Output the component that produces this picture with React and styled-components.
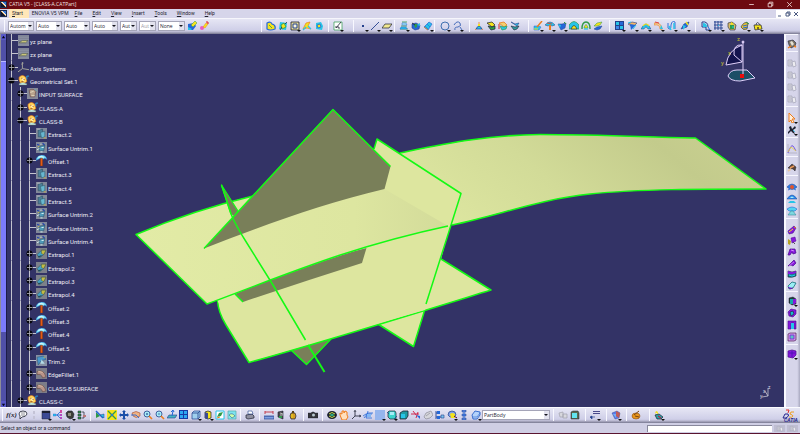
import React from "react"
import styled, { createGlobalStyle, css } from "styled-components"

const K = "#1c2030"
const N = "#23408c"
const B = "#2467d8"
const C = "#27c4e8"
const L = "#a6ecf6"
const Y = "#f4e31c"
const O = "#ee7d1c"
const P = "#8517dc"
const V = "#4a0b8c"
const G = "#2f9a4a"
const S = "#a9a9bc"
const W = "#ffffff"

// each icon is a list of [path, fill, stroke, stroke width] on a 10 x 10 grid
const icons = {
    paste: [["M1 3l6-1 2 3-3 4H1z", B], ["M4 4l4-4 2 2-4 4z", Y, G, 0.5], ["M1 6l4 2-1 1H1z", C]],
    ball: [["M1 7a2 2 0 1 0 4 0a2 2 0 1 0-4 0", "#ea5bc0"], ["M4 6l3-4 2 1-3 4z", Y, O, 0.5], ["M7 1h2v2", "none", "#e02020", 1]],
    blob: [["M1 2q4-2 5 1q4 1 3 5q-5 2-8 0z", Y, B, 1.2], ["M3 4l3 3", "none", G, 0.8]],
    patch: [["M2 1l7 1-1 7-7-1z", C], ["M3 4l3-2 2 4-4 2z", Y, G, 0.8], ["M2 9l2-3M7 3l2-2", "none", K, 0.7]],
    frame: [["M1 1h8v8H1z", "#e6dc9c", K, 0.8], ["M3 3h4v4H3z", "#f6f4e0", N, 1]],
    fold: [["M1 8l3-6 4-1-2 4 3 3-4-1z", Y, O, 0.7], ["M1 9l3-3M6 5l3 3", "none", C, 1.2]],
    splat: [["M2 2l5-1 2 4-1 4-6-1z", C], ["M3 4l3-1 1 3-3 1z", Y, B, 0.8]],
    sketch: [["M1 1h8v8H1z", W, G, 0.7], ["M3 7l5-6M2 6h4v2", "none", K, 0.8]],
    point: [["M4 4h2v2H4z", N]],
    line: [["M1 9l8-8", "none", N, 0.9]],
    plane: [["M3 3h7L7 7H0z", "#f1e890", K, 0.7]],
    sweep: [["M3 1h5M2 5h6M1 8h8", "none", G, 0.8], ["M3 2l4 0 1 2H3z", L, B, 0.5], ["M2 6h5l1 2H1z", C, B, 0.5]],
    cube3: [["M1 3l4-1 4 2-1 4-4 1-3-2z", B, N, 0.6], ["M3 3l3 0 0 3-2 1z", G], ["M6 4l3-2v3z", C], ["M1 2l3 2", "none", K, 0.8]],
    tube: [["M1 6l5-5 3 2-4 6z", C, B, 0.7], ["M2 5l3 3M4 3l3 3", "none", B, 0.6], ["M1 6l4 3", "none", O, 0.8]],
    circle: [["M1 5a4 4 0 1 0 8 0a4 4 0 1 0-8 0", "none", "#2e64a8", 0.9]],
    spline: [["M1 4q3-5 6-2q2 3-2 4q-4 0-3 3M7 6l2 3", "none", "#3a62b4", 0.9]],
    shell: [["M5 1v4L1 9M5 5l4 4", "none", O, 0.8], ["M2 8q3-6 6 0z", C, N, 0.7], ["M4 3h2v2H4z", Y]],
    stack: [["M1 2l5-1 3 3-3 2z", Y, K, 0.7], ["M2 5l4 1 3-1v3l-4 1z", G, K, 0.7]],
    stackO: [["M1 2l5-1 3 3-3 2z", "#f0d070", O, 0.8], ["M2 5l4 1 3-1-1 3-4 1z", C, G, 0.7], ["M1 3v5", "none", "#e02020", 1]],
    stackC: [["M1 1l4 2 4-1-2 3z", C, N, 0.6], ["M1 5l4 1 4-1-2 3-3 1z", "#2f9aa0", K, 0.6]],
    slash: [["M1 5h5l2 1-2 3H1z", C, B, 0.5], ["M4 6l5-6", "none", O, 1.4], ["M1 8h4", "none", Y, 1]],
    cap: [["M0 4q5-6 10 0l-3 1-2-1-2 1z", C, N, 0.5], ["M4 4h2v5H4z", O], ["M2 2l5 1", "none", "#e04020", 0.8]],
    capG: [["M0 5Q0 1 5 0q4 0 5 4l-2-1-2 1-2-1z", "#7ce6f5", B, 0.4], ["M4 3h2v7H4z", "#e65c14", "#7a3010", 0.4], ["M2 2q3-1 5 0", "none", W, 0.8]],
    cyl: [["M1 3l4 0 4-1-1 5-4 2z", B, N, 0.5], ["M1 3l3 1-1 3z", C], ["M7 1l2 2", "none", G, 1]],
    dome: [["M0 8V4q5-7 10 0v4z", C, G, 0.7], ["M2 8q3-7 6 0z", Y, K, 0.6]],
    arch: [["M1 8q0-7 4-7q4 0 4 7", "none", G, 1.4], ["M3 7q2-7 4 0z", Y, G, 0.6], ["M3 8h4", "none", C, 1.2]],
    waves: [["M1 5l3-3 5-1-2 3-3 1z", Y, G, 0.5], ["M1 8l3-2 5-1-2 3-3 1z", B, N, 0.5]],
    tiles: [["M0 0h9v9H0z", N], ["M1 1h3v3H1zM5 5h3v3H5z", C], ["M5 1h3v3H5z", B], ["M1 5h3v3H1z", "#3e86e8"]],
    hang: [["M0 3l4-2 5 1-4 4z", "#f3b565", N, 0.6], ["M2 3l6 1-5 5z", B], ["M0 2l3-1M5 8l3-4", "none", C, 1]],
    bow: [["M0 8q5-10 10 0l-3 0q-2-4-4 0z", C, N, 0.5], ["M2 5q3-4 6 0", "none", Y, 1.2]],
    bend: [["M0 2q8-1 8 7l-2-1q0-5-6-4z", "#f0cf9a", O, 0.6], ["M7 4l2 4H6z", C], ["M1 1l4 1", "none", "#e02020", 0.8]],
    loops: [["M1 2v5q3 3 3-3q1-5 4-3v7", "none", B, 0.9], ["M2 5l2 4M7 2v6", "none", C, 1.5]],
    kite: [["M1 8l3-5 5-2-2 5z", B, N, 0.6], ["M3 4l3 1-3 4z", C], ["M6 1l2 3", "none", Y, 1.4]],
    steps: [["M1 1q6-1 6 5M1 1v5h4v3h4", "none", N, 1], ["M2 2q4 0 4 4H2z", C], ["M7 6l2 3", "none", B, 1]],
    grid9: [["M1 0v9M4 0v9M7 0v9M0 1h9M0 4h9M0 7h9", "none", N, 0.9], ["M4 4h1v1H4z", C]],
    box: [["M1 2l4-1 4 3-1 5-5 0-2-3z", "#d9bd6b", K, 0.6], ["M3 4h4v4H3z", G], ["M4 1l3 2-3 1z", Y], ["M5 6h2", "none", C, 1]],
    clip: [["M1 6q3-6 7-4l-1 6q-4 2-6-2z", "#e5c336", K, 0.6], ["M3 5l4-1M3 7l5-1", "none", B, 1], ["M6 1l3 2", "none", G, 1]],
    pack: [["M1 4l7 0 1 4-7 1z", Y, K, 0.7], ["M3 4q1-5 4 0", "none", K, 0.7], ["M4 6h2v2H4z", "#7e6620"]],
    bubble: [["M1 4q0-3 4-3q4 0 4 3q-1 3-5 3L2 9l0-3z", W, K, 0.8], ["M3 3h4M3 5h4", "none", K, 0.5]],
    ghost: [["M4 1h2v3H4zM4 6h2v3H4z", "#c4c3d6"]],
    sheet: [["M1 1h8v8H1z", "#3c4a94", K, 0.5], ["M1 1h8v2H1z", K]],
    branch: [["M1 5h3M4 5l3-3M4 5l3 3M4 5h3", "none", B, 0.8], ["M0 4h3v2H0z", C, B, 0.4], ["M7 0h2v3H7z", "#d04aa0"], ["M7 4h2v2H7zM7 7h2v2H7z", "#b04ac0"]],
    bug: [["M3 1h4l2 3-1 4-3 1-3-2-1-4z", "#3b3c38", K, 0.6], ["M3 3h3v3H3z", "#8f8f80"]],
    list: [["M1 1h3v2H1zM1 4h3v2H1zM1 7h3v2H1z", G, K, 0.5], ["M5 2h2v6H5", "none", K, 0.7], ["M6 5h3v2H6z", "#b77"]],
    fly: [["M1 2l4 4-4 2z", G], ["M1 1l7 7", "none", B, 1.5], ["M5 5l4-1v4z", C, N, 0.5]],
    fit: [["M0 0h10v10H0z", Y], ["M1 1l3 3M9 1L6 4M1 9l3-3M9 9L6 6", "none", G, 1.3], ["M4 4h2v2H4z", C, N, 0.5]],
    pan: [["M5 0l2 2H6v2h2V3l2 2-2 2V6H6v2h1l-2 2-2-2h1V6H2v1L0 5l2-2v1h2V2H3z", "#1b4fa8"]],
    rotate: [["M1 3q4-3 8 0v3q-4 3-7 0z", "#efb285", "#a04a30", 0.6], ["M0 5h5l3 3", "none", B, 0.9]],
    zoomIn: [["M1 4a3 3 0 1 0 6 0a3 3 0 1 0-6 0", L, N, 0.8], ["M3 4h2M4 3v2", "none", N, 0.7], ["M6 6l3 3", "none", O, 1.6]],
    zoomOut: [["M1 4a3 3 0 1 0 6 0a3 3 0 1 0-6 0", L, N, 0.8], ["M3 4h2", "none", N, 0.7], ["M6 6l3 3", "none", O, 1.6]],
    normal: [["M0 8l2-3h8L8 8z", "#47b2c2", N, 0.6], ["M5 6l1-5M4 2l2-2 1 2", "none", B, 1]],
    quad: [["M0 0h9v9H0z", "#1738a4"], ["M1 1h3v3H1zM5 1h3v3H5zM1 5h3v3H1zM5 5h3v3H5z", "#2ca6f0"]],
    iso: [["M1 3l2-2h6v6L7 9H1z", "#9fd0ee", N, 0.7], ["M1 3h6v6M7 3l2-2", "none", N, 0.8]],
    shade: [["M2 2q3-2 6 0v6q-3 2-6 0z", Y, K, 0.7], ["M2 2q2 1 3 1v6q-2 0-3-1z", "#3c4a94"]],
    swap: [["M1 1h8v8H1z", W, C, 1], ["M2 7l2-4 4-1-2 4z", G], ["M2 8l3-1", "none", O, 1]],
    swap2: [["M1 1h8v8H1z", "#7de4ee", "#5aa", 0.7], ["M2 5q3-3 6 1l-3 2z", "#cfa", N, 0.5]],
    print: [["M1 5l6-1 2 2v2l-6 1-2-1z", "#9090a0", K, 0.7], ["M3 1h4l1 3H3z", W, N, 0.6]],
    measure: [["M1 1v3M9 1v3M1 2h8", "none", "#c03040", 0.9], ["M0 6h10v3H0z", "#7e9fe0", N, 0.7], ["M2 6v1M4 6v1M6 6v1M8 6v1", "none", N, 0.6]],
    item: [["M2 2l5-1v8l-5-2z", "#4c4c50", K, 0.6], ["M4 3l3 1M4 5l3 0", "none", "#d8d8d8", 0.8], ["M3 6h3v2H3z", G]],
    weight: [["M3 3h4l1 3-1 3H3L2 6z", "#d59e22", K, 0.7], ["M4 1h2v2H4z", "#55401a"], ["M4 4v4", "none", Y, 0.8]],
    camera: [["M0 3l3 0 1-1h2l1 1h3v5H0z", "#34343a", K, 0.4], ["M4 5a1.500 1.500 0 1 0 3 0a1.500 1.500 0 1 0-3 0", "#b8c8d0"]],
    update: [["M0 5q1-4 5-4q4 0 5 4q-1 4-5 4q-4 0-5-4z", K], ["M2 4q3-3 6 0M2 6q3 3 6 0", "none", "#c8dc50", 1], ["M3 5q2-2 4 0q-2 2-4 0", C, G, 0.7]],
    hand: [["M1 5V3l2 1V1h2v2l1-2 2 1v3l1 2-2 3H3z", "#ffe0bd", O, 1]],
    axis: [["M4 1v5L1 9M4 6l6 0", "none", K, 0.8], ["M3 2l1-2 1 2M8 5l2 1-2 1", "none", K, 0.6]],
    mesh: [["M0 6l3-2h6M1 8l4-5h5M3 8h6M5 1l-2 7", "none", B, 0.8], ["M4 4h4v3H4z", "#82b7f4"]],
    grid: [["M0 0h10v10H0z", "#cfe4fb"], ["M1 0v10M3 0v10M5 0v10M7 0v10M9 0v10M0 1h10M0 3h10M0 5h10M0 7h10M0 9h10", "none", "#4a7ad8", 0.5]],
    solid: [["M2 1h6l1 2v6H3L1 7V2z", "#3cd4cc", K, 0.7], ["M3 2h4v3H3z", L], ["M0 2l2 2M7 9l3-3", "none", N, 0.8]],
    solid2: [["M1 3l3-2h5v5L7 9H1z", "#1d9ca4", K, 0.8], ["M2 4h4v4H2z", C]],
    cut: [["M2 1l3 4M0 4h8M7 2l-2 6", "none", "#d02a50", 1], ["M5 5l4 1v3z", B]],
    stone: [["M1 7l2-4 5-2 2 4-3 3-4 1z", "#d6d6dc", "#8c8c98", 0.7], ["M3 6l4-3", "none", "#8c8c98", 0.7]],
    nodes: [["M1 1v8M1 3h3M1 7h5", "none", N, 0.9], ["M2 1h3v3H2zM2 6h3v3H2z", B], ["M6 5h3v3H6z", "#7cc4f0", N, 0.6]],
    gear: [["M1 5q0-4 4-4q4 0 4 4l-2 2H3z", "#7fa0e8", N, 0.7], ["M3 4q2-2 5 0l0 4H4z", Y], ["M7 6l3 2", "none", "#404", 1]],
    pins: [["M3 0h4v2H3zM3 4h4v2H3zM3 8h4v2H3z", "#5a86e4", N, 0.5], ["M5 2v6", "none", B, 1]],
    body: [["M1 5l3-4 5 1 0 3-3 4-4 0z", "#b4d2fb", "#2b63c8", 0.9], ["M2 7l4 0 3-4", "none", "#2b63c8", 0.6]],
    ghost2: [["M1 3l4-1v5H2zM5 4h4v4H5z", "#d8d8de", "#a2a2ae", 0.7]],
    ghostBox: [["M1 2h4v6H1z", "#d4d4dc", S, 0.8], ["M5 4l3-1 1 5-3 1z", "#ececf0", S, 0.8], ["M2 4h2M2 6h2", "none", S, 0.7]],
    cubeC: [["M1 2l2-1h5l1 2v6H1z", "#5b6b50", K, 0.5], ["M2 3h5v5H2z", "#62e4ee"]],
    tag: [["M3 1h7v1H3zM3 3h7v1H3z", "#4a4a8a"], ["M0 7l2-1v3zM2 7h3", "#23408c", N, 0.7]],
    shield: [["M1 3l5-2 3 2-1 5-4 1z", "#5d7be8", N, 0.4], ["M5 1l4 2-1 5-3-2z", "#c05c58"], ["M2 4l3 0 0 4z", "#74b0f4"]],
    orange: [["M1 6a4 3 0 1 0 8 0a4 3 0 1 0-8 0", "#e8961c", "#8a4a10", 0.6], ["M3 5l5-4M4 6l4 1", "none", "#7a4410", 1]],
    paint: [["M1 5l4-1 4 3-2 2-4 0z", "#27a4a8", K, 0.7], ["M2 1l2 3M1 3l3-1", "none", Y, 1], ["M4 6l3 2", "none", "#c02040", 1.2]],
    boot: [["M1 2l5-1 3 3-1 3-4 2-2-3z", "#7b7468", K, 0.6], ["M3 3l2-1 2 3-2 2z", "#e6e2d4"], ["M1 9l3-2M7 7l2 1", "none", O, 1.4]],
    arrow: [["M2 0l6 6H5l2 3-2 1-1-3-2 2z", "#fff0dc", O, 1]],
    tools: [["M2 2l2-1 1 3 3-3 1 2-3 2 2 4-2-1-2-2-3 3 0-2 2-2z", K], ["M6 5l2 2", "none", C, 0.8]],
    graph: [["M1 0v9h9", "none", S, 0.7], ["M1 9q3-9 5-7q1 1 3 5", "none", "#6a48e0", 0.9], ["M1 8l3-5 5 4", "none", "#e6cf3c", 0.8]],
    brush: [["M1 5l4-4 4 3-1 4-2-2z", "#5a4236", K, 0.5], ["M3 5l4-2", "none", "#e89858", 1.4], ["M1 8l3-2", "none", "#e6c6a0", 1.6]],
    eye: [["M0 5q5-6 10 0q-5 5-10 0z", "#2c7ce4", N, 0.5], ["M3 5a2 2 0 1 0 4 0a2 2 0 1 0-4 0", "#e2542c"], ["M1 8l2-1M9 8l-2-1", "none", B, 0.9]],
    umbrella: [["M0 5q5-8 10 0z", "#2a8cf0", N, 0.5], ["M3 4q2-3 4 0z", L], ["M3 7h4l2 2H1z", C]],
    umbrella2: [["M0 3q5-4 10 0l-2 2H2z", "#54d4f0", B, 0.6], ["M1 9l3-4h2l3 4z", "#7dd8e0", "#3c8c9c", 0.6]],
    pPencil: [["M1 6l6-5 2 2-3 5-4 1z", P, V, 0.6], ["M2 7l4-3", "none", Y, 1], ["M7 2l2 1", "none", O, 1]],
    pCut: [["M4 2l4-1 1 4-4 2z", P, V, 0.5], ["M1 3l3 2-1 4-2-1z", "#b6a420"], ["M6 6l2 2", "none", "#555", 1]],
    pPad: [["M1 8l2-6 5 0 1 4-3 1-1-2-2 3z", P, V, 0.7], ["M4 3l3 1", "none", "#d48aff", 1]],
    pRib: [["M1 8l6-6 2 3-3 3-2-1z", P, V, 0.7], ["M2 8l5-4", "none", "#d48aff", 0.8]],
    pShell: [["M1 2q4 2 8 0v5q-4 2-8 1z", "#12848c", K, 0.6], ["M1 2q4 2 8 0v2q-4 2-8 1z", P], ["M2 6q3 2 6 0", "none", C, 1]],
    pFillet: [["M1 6l4-4 4 1-3 5-4 1z", "#9aeef4", "#187078", 0.8], ["M1 7l2 2 3-1", P, V, 0.5]],
    pBlock: [["M2 2l4-1 3 2v5l-4 1-3-2z", "#20383c", K, 0.5], ["M3 3h3v5H3z", "#16a8a8"], ["M6 3l3 0v4l-3 2z", P]],
    pHole: [["M1 4l3-3 5 1v4L6 9 2 8z", P, V, 0.6], ["M3 4l3-1 1 3-3 2z", "#18bccc", K, 0.6]],
    pGate: [["M1 1h8v8H7V3H4v6H1z", P, V, 0.6], ["M4 3h3v6H4z", C]],
    pFrame: [["M1 2l2-1h6v7l-2 1H1z", "#c9a0e4", "#404", 0.6], ["M3 3h4v4H3z", "#5ac4c4", P, 0.8]],
    pGroup: [["M1 2l4-1 4 1v4L6 9 1 8z", P, V, 0.7], ["M2 4h6M5 2v6", "none", "#4614b0", 0.8]],
    // specification tree
    tPlane: [["M0 0h10v10H0z", "#7f8496"], ["M1 7l3-2h5L7 7z", "#c8c47a", "#4f5a50", 0.5], ["M0 2h10M0 4h10M0 9h10", "none", "#9a9fb0", 0.5]],
    tAxis: [["M4 0v6L0 9M4 6l6 1M3 2l2-1", "none", "#a2a29a", 0.9]],
    tSet: [["M1 2q3-3 6 0l1 4-3 2-3-1-1-3z", "#ffd75e", O, 0.6], ["M3 3l3 0-1 3z", "#fff6c8"], ["M1 8q3-2 7 0v1H1z", "#c8f2f4", "#6a7a60", 0.4], ["M8 4V1h2", "none", "#2ca8e8", 0.8], ["M3 3h1M5 4h1M3 6h2", "none", "#a04c20", 0.8]],
    tInput: [["M0 0h10v10H0z", "#868a98"], ["M2 2q4-2 6 1l-1 5-4 0z", "#b8a48e", "#6a4a44", 0.6], ["M3 4l3-1M4 7h3", "none", "#e8e0c4", 0.8], ["M7 1l2 2", "none", "#5ab8c8", 0.7]],
    tExtract: [["M0 0h10v10H0z", "#828999"], ["M2 2l4-1v7l-4 0z", "#4c8098", "#2a4a60", 0.5], ["M4 4l4-1v5l-3 1z", "#68b8d0", "#30586c", 0.5], ["M1 1h3", "none", "#c2c8d0", 0.7], ["M7 9h2", "none", "#c8b040", 0.8]],
    tUntrim: [["M0 0h10v10H0z", "#828999"], ["M1 2l2 1M6 1l2 2", "none", "#1c3fb0", 1], ["M3 4l5-1-1 5-4 0z", "#4f9ab8", "#2a4c66", 0.5], ["M1 7l2-1M4 2h1M5 5h2M4 9h2", "none", "#d0ecf0", 0.9], ["M2 4h1", "none", "#d8c840", 0.9]],
    tExtrapol: [["M0 0h10v10H0z", "#7c808a"], ["M1 6l4-4 4 0-2 4-4 3z", "#46a0c0", "#2c4c58", 0.5], ["M5 2l4 0-2 4-2-1z", "#c4bc44", "#4c5030", 0.4], ["M2 8l3-1", "none", "#1d3a44", 0.9]],
    tTrim: [["M0 0h10v10H0z", "#8690a2"], ["M1 2l6-1 2 3-4 1-3 4z", "#4a98cc", "#2c5078", 0.5], ["M5 4l3 4H4z", "#b4dce6"], ["M7 2h1", "none", "#d8c840", 1]],
    tFillet: [["M0 0h10v10H0z", "#7c7d88"], ["M1 3q6-2 8 5l-3 1q-1-4-5-3z", "#b8958a", "#604038", 0.5], ["M2 3l4 1", "none", "#e0c8a8", 0.7]],
}

const Art = ({ name }) => (
    <Glyph viewBox="0 0 10 10" aria-hidden="true">
        {icons[name].map(([d, fill, stroke, width], i) => (
            <path key={i} d={d} fill={fill} stroke={stroke || "none"} strokeWidth={width} />
        ))}
    </Glyph>
)

const Tool = ({ name, size, drop }) => (
    <ToolButton aria-label={name} $size={size} $drop={drop}>
        <Art name={name} />
    </ToolButton>
)

// a trailing "*" marks a tool that opens a fly-out
const toolList = (names, size) =>
    names.split(" ").map((n, i) => <Tool key={i} name={n.replace("*", "")} size={size} drop={n.endsWith("*")} />)

const Group = ({ tools, space = 0, size = 12, plain }) => (
    <ToolGroup $space={space} $plain={plain}>{toolList(tools, size)}</ToolGroup>
)

const Combo = ({ label, value, width, disabled }) => (
    <ComboBox $width={width}>
        <select aria-label={label} disabled={disabled} defaultValue={value}>
            <option>{value}</option>
        </select>
    </ComboBox>
)

const combos = [
    ["Fill color", "Autom", 26],
    ["Transparency", "Auto", 26],
    ["Line weight", "Auto", 26],
    ["Line type", "Auto", 26],
    ["Point symbol", "Aut", 17],
    ["Render style", "Aut", 17, true],
    ["Layer", "None", 27],
]

const topGroups = [
    { tools: "blob patch frame* fold splat" },
    { tools: "sketch*", space: 3 },
    { tools: "point* line* plane*", space: 9 },
    { tools: "sweep* cube3 tube*", space: 1 },
    { tools: "circle* spline*", size: 13 },
    { tools: "shell stack stackO stackC", space: 5 },
    { tools: "slash* cap* cyl* dome arch waves", space: 7 },
    { tools: "tiles* hang* bow* bend* loops* kite*", space: 5, size: 13 },
    { tools: "steps* grid9* box clip* pack*", space: 4, size: 13 },
]

const bottomGroups = [
    { tools: "sheet* branch bug* list", space: 1, plain: true },
    { tools: "fly fit pan rotate zoomIn zoomOut normal quad iso* shade* swap swap2", space: 2 },
    { tools: "print", space: 2 },
    { tools: "measure item weight", space: 3 },
    { tools: "camera", space: 4 },
    { tools: "update hand axis mesh grid* solid* solid2 cut stone nodes gear* pins body*", space: 3 },
]

const endGroups = [
    { tools: "ghost2 cubeC", space: 3 },
    { tools: "tag*", space: 4 },
    { tools: "shield*", space: 5 },
    { tools: "orange", space: 4 },
    { tools: "paint*", space: 7 },
]

const sideGroups = [
    { tools: "boot" },
    { tools: "ghostBox ghostBox ghostBox ghostBox" },
    { tools: "arrow* tools*" },
    { tools: "graph" },
    { tools: "brush" },
    { tools: "eye umbrella umbrella2" },
    { tools: "pPencil pCut pPad pRib pShell pFillet", tight: true },
    { tools: "pBlock* pHole pGate pFrame", thin: true },
    { tools: "pGroup*", thin: true },
]

// [label, icon, level, node sign]
const nodes = [
    ["yz plane", "tPlane", 0],
    ["zx plane", "tPlane", 0],
    ["Axis Systems", "tAxis", 0, "+"],
    ["Geometrical Set.1", "tSet", 0, "-"],
    ["INPUT SURFACE", "tInput", 1, "+"],
    ["CLASS-A", "tSet", 1, "+"],
    ["CLASS-B", "tSet", 1, "-"],
    ["Extract.2", "tExtract", 2],
    ["Surface Untrim.1", "tUntrim", 2],
    ["Offset.1", "capG", 2, "+"],
    ["Extract.3", "tExtract", 2],
    ["Extract.4", "tExtract", 2],
    ["Extract.5", "tExtract", 2],
    ["Surface Untrim.2", "tUntrim", 2],
    ["Surface Untrim.3", "tUntrim", 2],
    ["Surface Untrim.4", "tUntrim", 2],
    ["Extrapol.1", "tExtrapol", 2, "+"],
    ["Extrapol.2", "tExtrapol", 2, "+"],
    ["Extrapol.3", "tExtrapol", 2, "+"],
    ["Extrapol.4", "tExtrapol", 2, "+"],
    ["Offset.2", "capG", 2, "+"],
    ["Offset.3", "capG", 2, "+"],
    ["Offset.4", "capG", 2, "+"],
    ["Offset.5", "capG", 2, "+"],
    ["Trim.2", "tTrim", 2],
    ["EdgeFillet.1", "tFillet", 2, "+"],
    ["CLASS-B SURFACE", "tFillet", 2, "+"],
    ["CLASS-C", "tSet", 1, "+"],
]

function TreeRow({ label, icon, level, sign }) {
    return (
        <Row>
            {Array.from({ length: level }, (_, i) => <Guide key={i} />)}
            <Guide $joint>
                {sign && (
                    <Node aria-label={(sign === "+" ? "Expand " : "Collapse ") + label}>
                        <svg viewBox="0 0 7 7">
                            <circle cx="3.500" cy="3.500" r="3" fill="#06060c" />
                            <path d={sign === "+" ? "M1 3.500h5M3.500 1v5" : "M0 3.500h7"} stroke="#b4b4bc" strokeWidth="0.800" />
                        </svg>
                    </Node>
                )}
            </Guide>
            <RowIcon><Art name={icon} /></RowIcon>
            <RowLabel>{label}</RowLabel>
        </Row>
    )
}

function Scene() {
    return (
        <SceneSvg viewBox="7 34 777 373" role="img" aria-label="Surface model">
            <defs>
                <linearGradient id="wing" x1="0" y1="0.600" x2="1" y2="0.300">
                    <stop offset="0" stopColor="#dde6a0" />
                    <stop offset="0.400" stopColor="#d2db98" />
                    <stop offset="0.780" stopColor="#c3cb8c" />
                    <stop offset="1" stopColor="#c9d090" />
                </linearGradient>
                <linearGradient id="deck" x1="0" y1="0" x2="1" y2="0">
                    <stop offset="0" stopColor="#e2eba6" />
                    <stop offset="0.700" stopColor="#dde6a0" />
                    <stop offset="1" stopColor="#d3db9a" />
                </linearGradient>
            </defs>
            <g fill="none" stroke="#14fa14" strokeWidth="1.500" strokeLinejoin="round">
                <path fill="url(#wing)" d="M400 153C440 145 485 135 540 134.500C590 134.500 650 137 695.500 138L766 189C700 189 640 189 590 194C540 199 500 215 452 225" />
                <path fill="#797f59" d="M291 350L306.500 364.500L331 339" />
                <path fill="#dde69f" d="M378 324L413.500 346.500L425 309" />
                <path fill="#dde69f" stroke="none" d="M374 149L377 139L461 193.500L426 304L400 318L360 250z" />
                <path fill="#dde69f" d="M217.500 300Q218 312 226 325L249 362.500C330 340 410 315 491 290L441 259" />
                <path fill="#dde69f" stroke="none" d="M217 300L260 270L450 226L441 259L425 310L250 360z" />
                <path fill="#797f59" stroke="none" d="M235 294L243 302Q302 282 362 263L366.500 248Q300 265 235 294z" />
                <path d="M235 294L243 302" />
                <path fill="url(#deck)" stroke="none" d="M136 234.500C175 218 215 205 253 196L384.500 189L448 226C360 245 290 273 207 304z" />
                <path d="M253 196C215 205 175 218 136 234.500L207 304C290 273 350 247 448 226" />
                <path fill="#797f59" stroke="none" d="M333 109.500L390.500 166.500L384.500 189C320 204 260 227 204 248.500z" />
                <path d="M204 248.500L333 109.500L390.500 166.500" />
                <path d="M374 149L377 139L461 193.500L426 304" />
                <path fill="#797f59" strokeWidth="1.200" d="M234 216L238 211L221.500 185L231 214" />
                <path d="M221.500 185L231 214Q236 226 245 240L273 285L305.500 340" />
                <path strokeWidth="2" d="M308 345L324.500 372" />
            </g>
        </SceneSvg>
    )
}

export default function App() {
    return (
        <Window>
            <GlobalStyle />
            <TitleBar>
                <Badge />
                <h1>CATIA V5 - [CLASS-A.CATPart]</h1>
                <Caption>
                    <button aria-label="Minimize"><svg viewBox="0 0 6 6"><path d="M1 3h4" /></svg></button>
                    <button aria-label="Restore"><svg viewBox="0 0 6 6"><path d="M1 2h3v3H1zM2 2V1h3v3H4" /></svg></button>
                    <button aria-label="Close"><svg viewBox="0 0 6 6"><path d="M1 1l4 4M5 1L1 5" /></svg></button>
                </Caption>
            </TitleBar>
            <MenuBar>
                <Badge />
                <MenuItem $active><u>S</u>tart</MenuItem>
                <MenuItem $tight>ENOVIA V5 VPM</MenuItem>
                {["File", "Edit", "View", "Insert", "Tools", "Window", "Help"].map(m => (
                    <MenuItem key={m}><u>{m[0]}</u>{m.slice(1)}</MenuItem>
                ))}
                <DocButtons>
                    <button aria-label="Minimize document"><svg viewBox="0 0 6 6"><path d="M1 5h3" /></svg></button>
                    <button aria-label="Restore document"><svg viewBox="0 0 6 6"><path d="M1 2h3v3H1zM2 2V1h3v3H4" /></svg></button>
                    <button aria-label="Close document"><svg viewBox="0 0 6 6"><path d="M1 1l4 4M5 1L1 5" /></svg></button>
                </DocButtons>
            </MenuBar>
            <ToolBar>
                <ComboRow>
                    {combos.map(([label, value, width, disabled]) => (
                        <Combo key={label} label={label} value={value} width={width} disabled={disabled} />
                    ))}
                    <div>{toolList("paste ball", 12)}</div>
                </ComboRow>
                {topGroups.map(g => <Group key={g.tools} {...g} />)}
            </ToolBar>
            <Workspace>
                <ScrollBar>
                    <ScrollButton aria-label="Scroll up"><svg viewBox="0 0 6 6"><path d="M1 4l2-3 2 3z" /></svg></ScrollButton>
                    <Track><Thumb /></Track>
                    <ScrollButton aria-label="Scroll down"><svg viewBox="0 0 6 6"><path d="M1 2l2 3 2-3z" /></svg></ScrollButton>
                </ScrollBar>
                <Viewport>
                    <Scene />
                    <Tree>
                        {nodes.map(([label, icon, level, sign]) => (
                            <TreeRow key={label} label={label} icon={icon} level={level} sign={sign} />
                        ))}
                    </Tree>
                    <Compass viewBox="720 34 36 49" aria-label="Compass">
                        <path d="M728 76q2-6 9-6h10l8 8-15 3q-10 0-12-5z" fill="#1c4e66" />
                        <path d="M742 45Q728 50 726 65L742 62z" fill="#14144e" />
                        <path d="M742 45Q733 44 734 55L742 62M743 42V76" />
                        <circle cx="743" cy="42" r="1" fill="#e4d4ff" />
                        <path d="M740 74h4v4h-4z" fill="#e80c0c" stroke="none" />
                        <text x="737" y="41">z</text>
                        <text x="728" y="55">x</text>
                        <text x="721" y="65">y</text>
                    </Compass>
                    <Triad viewBox="0 0 13 16" aria-label="Axis orientation">
                        <path d="M8 12V4M8 12L2 13M8 12L5 7" />
                        <text x="8" y="5">z</text>
                        <text x="3" y="9">x</text>
                        <text x="0" y="14">y</text>
                    </Triad>
                </Viewport>
                <SideBar>
                    {sideGroups.map(g => (
                        <SideGroup key={g.tools} $thin={g.thin} $tight={g.tight}>{toolList(g.tools, 12)}</SideGroup>
                    ))}
                </SideBar>
            </Workspace>
            <ToolBar $bottom>
                <ToolGroup $space={2}>
                    <FormulaButton aria-label="Formula">f(x)</FormulaButton>
                    {toolList("bubble ghost", 11)}
                </ToolGroup>
                {bottomGroups.map(g => <Group key={g.tools} {...g} />)}
                <Combo label="Current body" value="PartBody" width={68} />
                {endGroups.map(g => <Group key={g.tools} {...g} />)}
                <Logo viewBox="0 0 18 15" aria-label="CATIA">
                    <path d="M3 5h3q2 2-2 4H1l2-4" stroke="#24248c" />
                    <path d="M12 3q-4-1-4 2q3 1 3 2q-1 2-4 1" stroke="#f0a020" />
                    <path d="M4 1l3 0-1 3" stroke="#e03030" />
                    <text x="2" y="13">CATIA</text>
                </Logo>
            </ToolBar>
            <StatusBar>
                <output>Select an object or a command</output>
                <input aria-label="Power input" />
                <button aria-label="Dialog"><Art name="ghostBox" /></button>
                <button aria-label="Camera"><Art name="ghostBox" /></button>
            </StatusBar>
        </Window>
    )
}

const GlobalStyle = createGlobalStyle`
    * {
        box-sizing: border-box;
    }
    body {
        margin: 0;
        background: #333366;
        font-family: Roboto, "Noto Sans", sans-serif;
        font-size: 6px;
        color: #23232f;
    }
    button, input, select {
        font: inherit;
        color: inherit;
        margin: 0;
        padding: 0;
        border: 0;
        border-radius: 0;
        background: none;
    }
`

const Window = styled.div`
    display: grid;
    grid-template-columns: minmax(0, 1fr);
    grid-template-rows: 9px 10px 15px minmax(0, 1fr) 16px 10px;
    height: 100vh;
    overflow: hidden;
    border-bottom: 1px solid #5a1430;
`

const TitleBar = styled.header`
    display: flex;
    align-items: center;
    background: #6d0a11;
    color: #f4e4e4;
    h1 {
        flex: 1;
        margin: 0;
        padding-left: 2px;
        font: 5px/9px "Open Sans", sans-serif;
    }
`

const Badge = styled.i`
    width: 7px;
    height: 7px;
    border: 1px solid #1c2c50;
    background: linear-gradient(45deg, #10182c 40%, #e89a2c 45%, #f2f2f2 60%, #3a78d0 65%);
`

const Caption = styled.div`
    display: flex;
    gap: 12px;
    padding-right: 7px;
    button {
        width: 7px;
        height: 7px;
    }
    svg {
        display: block;
        fill: none;
        stroke: #f0dada;
        stroke-width: 0.7;
    }
`

const MenuBar = styled.nav`
    display: flex;
    align-items: center;
    background: #d6d5ea;
    border-bottom: 1px solid #f6f6fc;
`

const MenuItem = styled.button`
    height: 9px;
    padding: 0 5px;
    font-size: 5px;
    line-height: 9px;
    white-space: nowrap;
    u {
        text-underline-offset: 1px;
    }
    ${p => p.$active && css`
        padding: 0 6px 0 3px;
        margin-left: 2px;
        background: #ffe7b8;
    `}
    ${p => p.$tight && css`
        padding: 0 1px 0 3px;
    `}
`

const DocButtons = styled.div`
    display: flex;
    gap: 2px;
    height: 8px;
    margin-left: auto;
    padding: 1px 1px 0;
    background: #fff;
    button {
        width: 6px;
        height: 6px;
    }
    svg {
        display: block;
        fill: none;
        stroke: #4b5a80;
        stroke-width: 1;
    }
`

const ToolBar = styled.div`
    display: flex;
    align-items: center;
    min-width: 0;
    padding-bottom: 2px;
    background: linear-gradient(#e6e6f4, #cfcfe8 75%, #b9b8d0 85%, #77778f);
    ${p => p.$bottom && css`
        padding-top: 1px;
        border-top: 1px solid #fbfbff;
    `}
`

const ComboRow = styled.div`
    display: flex;
    align-items: center;
    gap: 2px;
    width: 257px;
    flex: none;
    margin-left: 4px;
    padding-left: 3px;
    border-left: 1px solid #f8f8ff;
    div {
        display: flex;
        margin-left: -1px;
    }
`

const ComboBox = styled.span`
    display: flex;
    flex: none;
    position: relative;
    width: ${p => p.$width}px;
    height: 10px;
    border: 1px solid #a5a5b8;
    background: #fff;
    select {
        appearance: none;
        width: 100%;
        padding: 0 5px 0 1px;
        font-family: "Open Sans", sans-serif;
        font-size: 5px;
        line-height: 8px;
        outline: 0;
    }
    select:disabled {
        color: #9a9aa6;
        opacity: 1;
    }
    &::after {
        content: "";
        position: absolute;
        right: 0;
        top: 0;
        width: 5px;
        height: 8px;
        background: #e2e2ee;
        pointer-events: none;
    }
    &::before {
        content: "";
        position: absolute;
        z-index: 1;
        right: 1px;
        top: 3px;
        border: 2px solid transparent;
        border-width: 2px 2px 0;
        border-top-color: #16161e;
        pointer-events: none;
    }
`

const ToolGroup = styled.div`
    display: flex;
    flex: none;
    margin-left: ${p => p.$space}px;
    ${p => !p.$plain && css`
        padding-left: 3px;
        border-left: 1px solid #f8f8ff;
    `}
`

const ToolButton = styled.button`
    position: relative;
    display: flex;
    align-items: center;
    justify-content: center;
    flex: none;
    width: ${p => p.$size}px;
    height: 12px;
    ${p => p.$drop && css`
        &::after {
            content: "";
            position: absolute;
            right: 0;
            bottom: 0;
            border: 1px solid transparent;
            border-width: 2px 2px 0;
            border-top-color: #111;
        }
    `}
`

const Glyph = styled.svg`
    display: block;
    flex: none;
    width: 10px;
    height: 10px;
`

const FormulaButton = styled.button`
    width: 11px;
    height: 12px;
    font: italic bold 7px "Liberation Serif", serif;
`

const Workspace = styled.main`
    display: grid;
    grid-template-columns: 7px minmax(0, 1fr) 16px;
    min-height: 0;
`

const ScrollBar = styled.div`
    display: flex;
    flex-direction: column;
    background: #25255c;
    border-left: 1px solid #8d8d98;
    border-right: 1px solid #1c1c48;
`

const ScrollButton = styled.button`
    height: 6px;
    background: #5959c8;
    svg {
        display: block;
        fill: #05051c;
    }
`

const Track = styled.div`
    flex: 1;
    display: grid;
    grid-template-rows: 21fr 272fr 69fr;
    background: #5050a8;
`

const Thumb = styled.div`
    grid-row: 2;
    background: #7b7bfb;
    border-top: 1px solid #b9b9ff;
`

const Viewport = styled.section`
    display: grid;
    grid-template: minmax(0, 1fr) / minmax(0, 1fr);
    background: #333366;
    overflow: hidden;
    > * {
        grid-area: 1 / 1;
    }
`

const SceneSvg = styled.svg`
    width: 100%;
    height: 100%;
`

const Tree = styled.ul`
    display: flex;
    flex-direction: column;
    justify-self: start;
    margin: 0;
    padding: 0;
    list-style: none;
    color: #ececf4;
`

const Row = styled.li`
    display: flex;
    flex: 1;
    align-items: center;
    min-height: 0;
`

const Guide = styled.span`
    position: relative;
    align-self: stretch;
    display: flex;
    align-items: center;
    justify-content: center;
    width: 9px;
    background: linear-gradient(#c4c4ce, #c4c4ce) center / 1px 100% no-repeat;
    ${p => p.$joint && css`
        &::after {
            content: "";
            position: absolute;
            left: 5px;
            right: -2px;
            height: 1px;
            background: #c4c4ce;
        }
    `}
`

const Node = styled.button`
    z-index: 1;
    flex: none;
    width: 7px;
    height: 7px;
    svg {
        display: block;
    }
`

const RowIcon = styled.span`
    margin: 0 1px 0 2px;
    svg {
        width: 11px;
        height: 11px;
    }
`

const RowLabel = styled.span`
    padding-top: 3px;
    line-height: 8px;
    white-space: nowrap;
`

const Compass = styled.svg`
    justify-self: end;
    width: 36px;
    height: 49px;
    margin-right: 28px;
    fill: none;
    stroke: #e0d0fa;
    text {
        fill: #c8c030;
        stroke: none;
        font-size: 6px;
    }
`

const Triad = styled.svg`
    justify-self: end;
    align-self: end;
    width: 13px;
    height: 16px;
    margin: 0 11px 7px 0;
    fill: none;
    stroke: #c6c6d2;
    stroke-width: 0.8;
    text {
        fill: #d6d6e0;
        stroke: none;
        font-size: 5px;
    }
`

const SideBar = styled.aside`
    display: flex;
    flex-direction: column;
    align-items: center;
    background: linear-gradient(90deg, #d6d5ea 80%, #a9a9c0);
    border-left: 2px solid #fafaff;
    padding-right: 2px;
`

const SideGroup = styled.div`
    padding-top: ${p => (p.$thin ? 3 : 5)}px;
    border-top: 1px solid #f6f6fe;
    margin-top: 1px;
    &:first-child {
        margin-top: 0;
        padding-top: 3px;
    }
    ${p => p.$tight && css`
        button {
            height: 11px;
        }
    `}
`

const Logo = styled.svg`
    width: 18px;
    height: 15px;
    margin: 0 0 -2px auto;
    fill: none;
    text {
        fill: #24248c;
        font-size: 5px;
        font-weight: 700;
        font-style: italic;
    }
`

const StatusBar = styled.footer`
    display: flex;
    align-items: center;
    gap: 2px;
    background: #cfcee4;
    padding-right: 2px;
    output {
        flex: 1;
        padding-left: 1px;
        font-size: 5px;
        line-height: 10px;
    }
    input {
        width: 125px;
        height: 7px;
        border-left: 1px solid #88889c;
        border-top: 1px solid #88889c;
        background: #fff;
    }
    button {
        width: 11px;
        height: 7px;
        display: flex;
        justify-content: center;
        background: #bfbed2;
    }
    svg {
        height: 7px;
    }
`
